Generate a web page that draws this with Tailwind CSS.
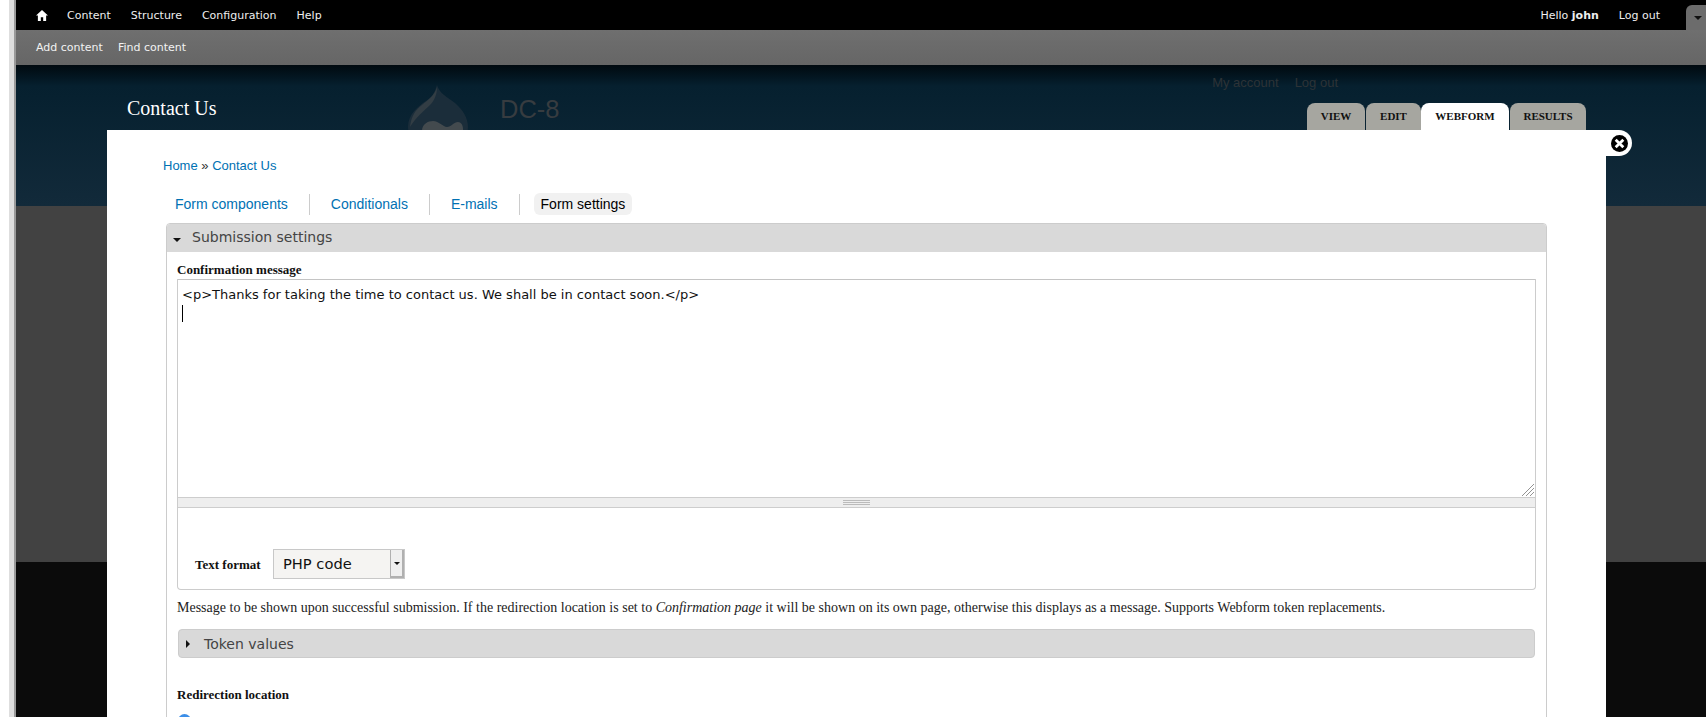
<!DOCTYPE html>
<html lang="en">
  <head>
    <meta charset="UTF-8" />
    <title>Contact Us - DC-8</title>
    <script src="https://cdn.jsdelivr.net/npm/@tailwindcss/browser@4"></script>
  </head>
  <body class="h-[717px] overflow-hidden bg-[#0b0b0b] font-['Liberation_Sans',sans-serif]">
    <div class="flex h-[717px]">
      <!-- window edge -->
      <div class="w-[16px] shrink-0 bg-[#dedede] border-l-[9px] border-r-2 border-l-white border-r-[#9a9a9a]"></div>

      <div class="relative flex-1 min-w-0 flex flex-col">
        <!-- toolbar -->
        <div class="h-[30px] bg-black flex items-center pl-[20px] pr-[46px] text-[#eeeeee] font-['DejaVu_Sans',sans-serif] text-[11px]">
          <svg class="w-[12px] h-[11px] mr-[19px]" viewBox="0 0 13 12" fill="#fff"><path d="M6.5 0 L13 6 L11 6 L11 12 L7.8 12 L7.8 8 L5.2 8 L5.2 12 L2 12 L2 6 L0 6 Z"/></svg>
          <nav class="flex gap-[20px] pt-[2px]">
            <a>Content</a>
            <a>Structure</a>
            <a>Configuration</a>
            <a>Help</a>
          </nav>
          <div class="ml-auto flex gap-[20px] pt-[2px]">
            <span>Hello <b>john</b></span>
            <a>Log out</a>
          </div>
        </div>
        <div class="absolute right-0 top-[5px] w-[20px] h-[25px] bg-[#6c6c6c] rounded-tl-md pl-[8px] pt-[11px]">
          <svg class="block w-[8px] h-[4px]" viewBox="0 0 8 4" fill="#111"><path d="M0 0 H8 L4 4 Z"/></svg>
        </div>

        <!-- shortcuts -->
        <div class="h-[35px] pt-[2px] bg-gradient-to-b from-[#6f6f6f] to-[#666666] flex items-center gap-[15px] pl-[20px] text-[#f2f2f2] font-['DejaVu_Sans',sans-serif] text-[11px]">
          <a>Add content</a>
          <a>Find content</a>
        </div>

        <!-- site header -->
        <div class="h-[141px] overflow-hidden bg-gradient-to-b from-[#010a10] via-[#06202f] via-15% to-[#122a3a] flex items-start pl-[111px] pr-[368px]">
          <div class="w-[281px] pt-[28px] font-['Liberation_Serif',serif] text-[20px] text-white">Contact Us</div>
          <svg class="w-[60px] h-[66px] mt-[20px] shrink-0" viewBox="0 0 60 66">
            <path d="M29 0 C31 8 39 12 47 18 C55 25 60 33 60 42 C60 58 45 66 30 66 C13 66 0 56 0 42 C0 30 9 22 18 16 C23 13 27 8 29 0 Z" fill="#1b2d3a"/>
            <path d="M29 2 C27 10 20 15 14 20 C7 25 3 32 2 42 C8 32 16 26 22 20 C26 16 29 10 29 2 Z" fill="#323d44"/>
            <path d="M14 46 C14 39 20 36 25 36 C31 36 35 42 39 42 C43 42 46 37 50 37 C53 37 55 40 55 44 L55 66 L14 66 Z" fill="#434a4e"/>
          </svg>
          <div class="ml-[32px] pt-[27px] text-[25.5px] leading-[34px] text-[#373c40]">DC-8</div>
          <div class="ml-auto flex gap-[16px] pt-[10px] text-[13px] leading-[16px] text-[#2d3337]">
            <a>My account</a>
            <a>Log out</a>
          </div>
        </div>

        <!-- page body behind the overlay -->
        <div class="h-[356px] bg-[#424242]"></div>
        <div class="flex-1 bg-[#0b0b0b]"></div>

        <!-- primary tabs -->
        <div class="absolute left-[1291px] top-[103px] flex h-[27px] gap-px font-['Liberation_Serif',serif] text-[11px] font-bold uppercase text-[#111111]">
          <a class="w-[58px] rounded-t-lg bg-[#a6a6a0] flex items-center justify-center">View</a>
          <a class="w-[55px] rounded-t-lg bg-[#a6a6a0] flex items-center justify-center">Edit</a>
          <a class="w-[88px] -ml-px rounded-t-lg bg-white flex items-center justify-center">Webform</a>
          <a class="w-[76px] rounded-t-lg bg-[#a6a6a0] flex items-center justify-center">Results</a>
        </div>

        <!-- overlay -->
        <div class="absolute left-[91px] top-[130px] w-[1499px] h-[587px] bg-white overflow-hidden pl-[56px] pt-[28px]">
          <div class="h-[16px] text-[13px] leading-[16px] text-[#333]">
            <a class="text-[#0071b3]">Home</a> » <a class="text-[#0071b3]">Contact Us</a>
          </div>

          <div class="flex items-center h-[22px] mt-[19px] text-[14px] text-[#0071b3]">
            <a class="pl-[12px] pr-[21px] border-r border-[#cccccc] leading-[21px]">Form components</a>
            <a class="pl-[21px] pr-[21px] border-r border-[#cccccc] leading-[21px]">Conditionals</a>
            <a class="pl-[21px] pr-[21px] border-r border-[#cccccc] leading-[21px]">E-mails</a>
            <a class="ml-[14px] px-[7px] h-[22px] leading-[22px] rounded-md bg-[#f1f1f1] text-black">Form settings</a>
          </div>

          <!-- submission settings -->
          <div class="mt-[8px] ml-[3px] w-[1381px] h-[600px] border border-[#cccccc] rounded-t-[4px] font-['Liberation_Serif',serif]">
            <div class="h-[28px] bg-[#d9d9d9] flex items-center pl-[6px] pb-px rounded-t-[3px] font-['DejaVu_Sans',sans-serif] text-[14px] text-[#444444]">
              <svg class="w-[8px] h-[4px] mr-[11px] mt-[4px]" viewBox="0 0 8 4" fill="#111"><path d="M0 0 H8 L4 4 Z"/></svg>
              <span>Submission settings</span>
            </div>

            <div class="px-[10px]">
              <div class="mt-[10px] h-[16px] text-[13px] leading-[16px] font-bold text-[#111]">Confirmation message</div>

              <div class="mt-px h-[311px] border border-t-0 border-[#cccccc] rounded-b-[4px]">
                <div class="relative h-[218px] border-t border-[#c4c4c4] px-[4px] pt-[6px] font-['DejaVu_Sans',sans-serif] text-[13px] leading-[18px] text-[#111]">
                  <div>&lt;p&gt;Thanks for taking the time to contact us. We shall be in contact soon.&lt;/p&gt;</div>
                  <div class="w-px h-[17px] mt-px bg-black"></div>
                  <svg class="absolute right-px bottom-px w-[12px] h-[12px]" viewBox="0 0 12 12" stroke="#777" stroke-width="0.8"><path d="M0 12 L12 0 M4 12 L12 4 M8 12 L12 8"/></svg>
                </div>
                <div class="h-[11px] bg-[#eeeeee] border-y border-y-[#cdcdcd] flex flex-col items-center justify-center gap-px">
                  <div class="w-[27px] h-[1px] bg-[#bbbbbb]"></div>
                  <div class="w-[27px] h-[1px] bg-[#bbbbbb]"></div>
                  <div class="w-[27px] h-[1px] bg-[#bbbbbb]"></div>
                </div>
                <div class="flex items-center pt-[41px] pl-[17px]">
                  <span class="w-[78px] pt-[2px] text-[13px] font-bold text-[#111]">Text format</span>
                  <div class="flex w-[132px] h-[30px] border border-[#c8c8c8] bg-[#f5f4f2] font-['DejaVu_Sans',sans-serif] text-[14.67px] text-[#111]">
                    <span class="flex-1 pl-[9px] leading-[28px]">PHP code</span>
                    <span class="w-[14px] flex items-center justify-center bg-[#efefef] border-l border-r-2 border-b-2 border-[#b0b0b0]">
                      <svg class="w-[6px] h-[3px]" viewBox="0 0 6 3" fill="#111"><path d="M0 0 H6 L3 3 Z"/></svg>
                    </span>
                  </div>
                </div>
              </div>

              <p class="mt-[9px] h-[17px] text-[14px] leading-[17px] text-[#222]">Message to be shown upon successful submission. If the redirection location is set to <em>Confirmation page</em> it will be shown on its own page, otherwise this displays as a message. Supports Webform token replacements.</p>

              <div class="mt-[13px] h-[29px] mx-px bg-[#d9d9d9] border border-[#cccccc] rounded-[4px] flex items-center pl-[7px] pt-px font-['DejaVu_Sans',sans-serif] text-[14px] text-[#444444]">
                <svg class="w-[4px] h-[8px] mr-[14px]" viewBox="0 0 4 8" fill="#111"><path d="M0 0 L4 4 L0 8 Z"/></svg>
                <span>Token values</span>
              </div>

              <div class="mt-[29px] h-[16px] text-[13px] leading-[16px] font-bold text-[#111]">Redirection location</div>
              <div class="mt-[11px] ml-px flex items-start gap-[8px] text-[13px] leading-[16px]">
                <span class="w-[13px] h-[13px] rounded-full bg-[#3b8ee8]"></span>
                <span>Confirmation page</span>
              </div>
            </div>
          </div>
        </div>

        <!-- overlay close button -->
        <div class="absolute left-[1576px] top-[130px] w-[40px] h-[26px] bg-white rounded-r-full flex items-center justify-end pr-[4px]">
          <svg class="w-[17px] h-[17px]" viewBox="0 0 16 16"><circle cx="8" cy="8" r="8" fill="#000"/><path d="M4.4 4.4 L11.6 11.6 M11.6 4.4 L4.4 11.6" stroke="#fff" stroke-width="2.6"/></svg>
        </div>
      </div>
    </div>
  </body>
</html>
